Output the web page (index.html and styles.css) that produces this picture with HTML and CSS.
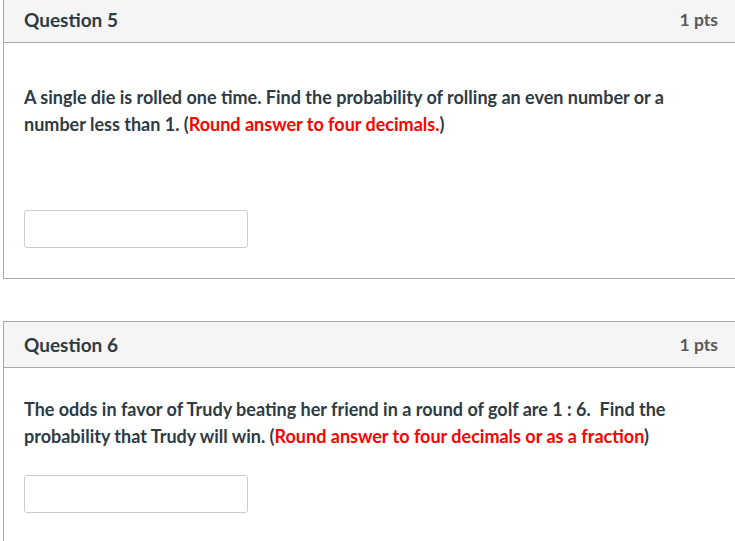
FILE: index.html
```html
<!DOCTYPE html>
<html>
<head>
<meta charset="utf-8">
<link rel="stylesheet" href="styles.css">
</head>
<body>
<div class="page">
  <section class="question q5">
    <header class="q-header">
      <h2 class="q-title">Question 5</h2>
      <span class="q-pts">1 pts</span>
    </header>
    <div class="q-body">
      <p class="q-text">A single die is rolled one time. Find the probability of rolling an even number or a number less than 1. (<span class="red">Round answer to four decimals.</span>)</p>
      <input class="q-input" type="text">
    </div>
  </section>
  <section class="question q6">
    <header class="q-header">
      <h2 class="q-title">Question 6</h2>
      <span class="q-pts">1 pts</span>
    </header>
    <div class="q-body">
      <p class="q-text">The odds in favor of Trudy beating her friend in a round of golf are 1 : 6.&nbsp; Find the probability that Trudy will win. (<span class="red">Round answer to four decimals or as a fraction</span>)</p>
      <input class="q-input" type="text">
    </div>
  </section>
</div>
</body>
</html>
```

FILE: styles.css
```css
html, body {
  margin: 0;
  padding: 0;
  background: #fff;
  overflow: hidden;
}
body {
  font-family: Lato, "Open Sans", sans-serif;
  color: #2d3b45;
  width: 735px;
  height: 541px;
}
.page {
  display: flex;
  flex-direction: column;
  gap: 42px;
  margin-top: -4px;
  margin-left: 3px;
  width: 780px;
}
.question {
  border: 1px solid #a9a9a9;
  background: #fff;
}
.q-header {
  height: 45px;
  background: #f5f5f5;
  border-bottom: 1px solid #a9a9a9;
  display: flex;
  align-items: center;
  justify-content: space-between;
  padding-left: 20px;
  padding-right: 64px;
}
.q-title {
  margin: 0;
  font-size: 19px;
  font-weight: 700;
  color: #2d3b45;
}
.q-pts {
  font-size: 17.5px;
  font-weight: 700;
  color: #595959;
}
.q-body {
  padding-left: 20px;
  display: flex;
  flex-direction: column;
  align-items: flex-start;
}
.q-text {
  margin: 0;
  width: 680px;
  font-size: 18px;
  line-height: 27px;
  font-weight: 700;
}
.red {
  color: #ff0000;
}
.q-input {
  width: 224px;
  height: 38px;
  box-sizing: border-box;
  border: 1px solid #c7cdd1;
  border-radius: 3px;
  background: #fff;
  margin: 0;
}
.q5 .q-body {
  padding-top: 41px;
  padding-bottom: 30px;
}
.q5 .q-input {
  margin-top: 72px;
}
.q6 .q-body {
  padding-top: 28px;
  padding-bottom: 40px;
}
.q6 .q-input {
  margin-top: 25px;
}
```
